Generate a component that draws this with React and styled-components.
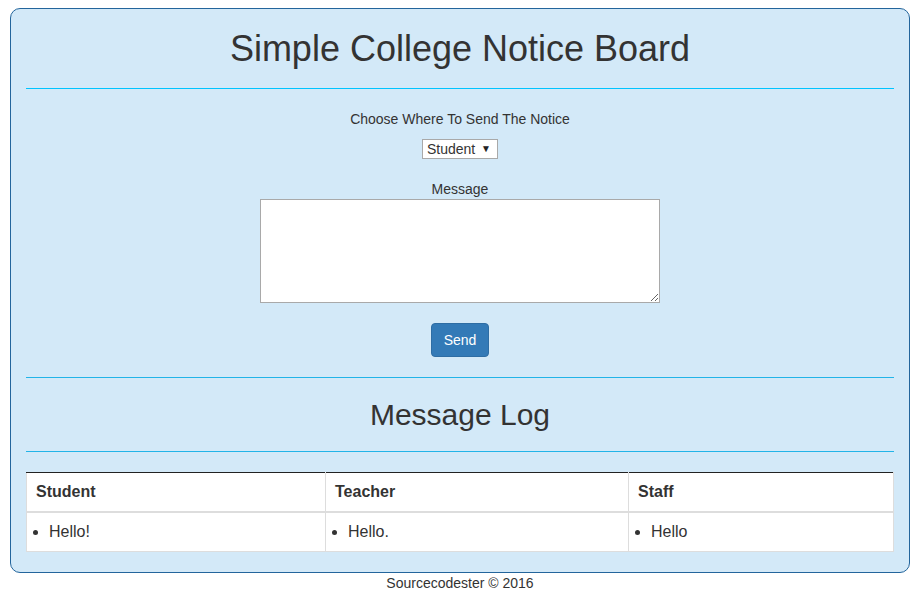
import React from 'react';
import styled, { createGlobalStyle } from 'styled-components';

// Page wide defaults (bootstrap-like)
const GlobalStyle = createGlobalStyle`
  body {
    margin: 0;
    background: #ffffff;
    color: #333333;
    font-family: "Liberation Sans", Arial, Helvetica, sans-serif;
    font-size: 14px;
    line-height: 20px;
  }
`;

const Page = styled.div`
  padding: 8px 9px 0 10px;
`;

// Rounded light-blue panel holding everything
const Board = styled.div`
  background-color: #d3e9f8;
  border: 1px solid #23659c;
  border-radius: 10px;
  padding: 0 15px 20px;
`;

const Title = styled.h1`
  margin: 20px 0 0;
  font-size: 36px;
  line-height: 40px;
  font-weight: normal;
  text-align: center;
  color: #333333;
`;

const SubTitle = styled.h2`
  margin: 0;
  font-size: 30px;
  line-height: 33px;
  font-weight: normal;
  text-align: center;
  color: #333333;
`;

const Divider = styled.hr`
  border: 0;
  border-top: 1px solid ${(p) => p.$color || '#22b4e8'};
  margin: ${(p) => p.$top}px 0 20px;
  height: 0;
`;

// Centered form column
const Form = styled.form`
  display: flex;
  flex-direction: column;
  align-items: center;
`;

const Label = styled.label`
  display: block;
  margin-top: ${(p) => p.$top || 0}px;
`;

const SelectBox = styled.div`
  margin-top: 10px;
  display: flex;
  align-items: center;
  box-sizing: border-box;
  width: 76px;
  height: 20px;
  background: #ffffff;
  border: 1px solid #a9a9a9;
`;

const Select = styled.select`
  appearance: none;
  flex: 1;
  min-width: 0;
  border: none;
  background: transparent;
  font-family: inherit;
  font-size: 14px;
  color: #333333;
  padding: 0 0 0 4px;
  height: 18px;
  outline: none;
`;

const Arrow = styled.span`
  font-size: 10px;
  line-height: 18px;
  padding-right: 6px;
  color: #222222;
`;

const TextArea = styled.textarea`
  box-sizing: border-box;
  width: 400px;
  height: 104px;
  margin: 0;
  border: 1px solid #a9a9a9;
  background: #ffffff;
  font-family: inherit;
`;

const Button = styled.button`
  margin-top: 20px;
  box-sizing: border-box;
  height: 34px;
  padding: 6px 12px;
  font-family: inherit;
  font-size: 14px;
  line-height: 20px;
  color: #ffffff;
  background-color: #337ab7;
  border: 1px solid #2e6da4;
  border-radius: 4px;
  cursor: pointer;
`;

// Message log table
const Table = styled.table`
  width: 100%;
  table-layout: fixed;
  border-collapse: collapse;
  background: #ffffff;
`;

const Col = styled.col`
  width: ${(p) => (p.$w ? `${p.$w}px` : 'auto')};
`;

const Th = styled.th`
  text-align: left;
  padding: 8px 9px;
  font-size: 16px;
  line-height: 22px;
  font-weight: bold;
  border: 1px solid #dddddd;
  border-top: 1px solid #222222;
  border-bottom: 2px solid #dddddd;
`;

const Td = styled.td`
  padding: 8px 9px;
  line-height: 22px;
  border: 1px solid #dddddd;
`;

const List = styled.ul`
  margin: 0;
  padding-left: 13px;
  font-size: 16px;
  line-height: 22px;
`;

const Footer = styled.div`
  text-align: center;
  font-size: 14px;
  line-height: 20px;
`;

const columns = [
  { name: 'Student', width: 299, messages: ['Hello!'] },
  { name: 'Teacher', width: 303, messages: ['Hello.'] },
  { name: 'Staff', width: 0, messages: ['Hello'] },
];

const App = () => (
  <Page>
    <GlobalStyle />
    <Board>
      <Title>Simple College Notice Board</Title>
      <Divider $top={19} $color="#00c4ff" />

      <Form onSubmit={(e) => e.preventDefault()}>
        <Label>Choose Where To Send The Notice</Label>
        <SelectBox>
          <Select defaultValue="Student">
            <option>Student</option>
            <option>Teacher</option>
            <option>Staff</option>
          </Select>
          <Arrow>▼</Arrow>
        </SelectBox>
        <Label $top={20}>Message</Label>
        <TextArea />
        <Button type="submit">Send</Button>
      </Form>

      <Divider $top={20} />
      <SubTitle>Message Log</SubTitle>
      <Divider $top={20} />

      <Table>
        <colgroup>
          {columns.map((c) => (
            <Col key={c.name} $w={c.width} />
          ))}
        </colgroup>
        <thead>
          <tr>
            {columns.map((c) => (
              <Th key={c.name}>{c.name}</Th>
            ))}
          </tr>
        </thead>
        <tbody>
          <tr>
            {columns.map((c) => (
              <Td key={c.name}>
                <List>
                  {c.messages.map((m) => (
                    <li key={m}>{m}</li>
                  ))}
                </List>
              </Td>
            ))}
          </tr>
        </tbody>
      </Table>
    </Board>
    <Footer>Sourcecodester © 2016</Footer>
  </Page>
);

export default App;
